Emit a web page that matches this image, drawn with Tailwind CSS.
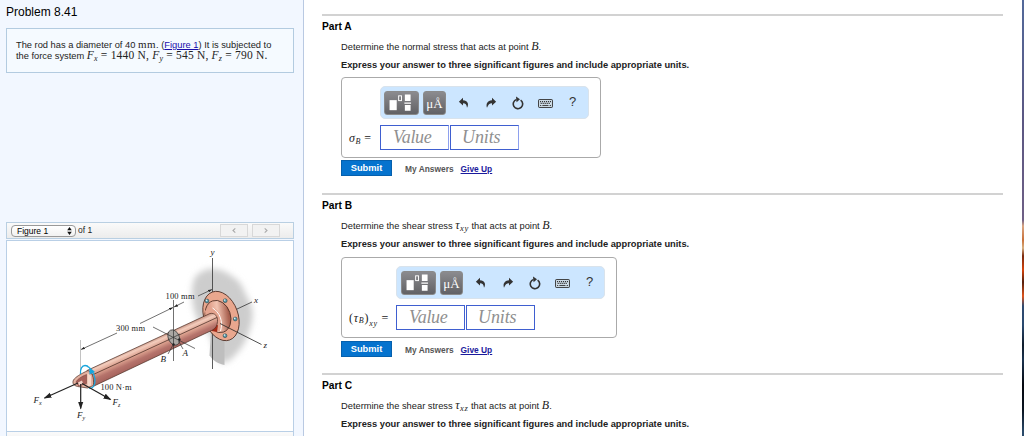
<!DOCTYPE html>
<html lang="en">
<head>
    <meta charset="UTF-8">
    <meta name="viewport" content="width=device-width, initial-scale=1.0">
    <title>Problem 8.41</title>
    <script src="https://cdn.jsdelivr.net/npm/@tailwindcss/browser@4"></script>
</head>
<body class="bg-white font-['Liberation_Sans',Arial,sans-serif] text-[9.3px] text-[#222] h-[436px] overflow-hidden flex">

    <!-- Shared icons -->
    <svg class="hidden">
        <symbol id="template" viewBox="0 0 34 23">
            <rect x="4.500" y="8.500" width="7.500" height="10.500" fill="#fff"/>
            <rect x="14" y="4" width="3" height="5" fill="none" stroke="#fff" stroke-width="1"/>
            <path d="M20.500 2.500h6v7h-6zM20 11h7v1.200h-7zM20.500 13.700h6v6h-6z" fill="#fff"/>
        </symbol>
        <symbol id="undo" viewBox="0 0 12 12">
            <path d="M5 .8 .9 4.800 5 8.500V6.200c2.600 0 3.700 1.400 4 4.500 2.300-3.600.6-7.300-4-7.500z" fill="#333"/>
        </symbol>
        <symbol id="redo" viewBox="0 0 12 12">
            <path d="M7 .8l4.100 4L7 8.500V6.200c-2.600 0-3.700 1.400-5 4.500C.7 7.100 2.400 3.400 7 3.200z" fill="#333"/>
        </symbol>
        <symbol id="reset" viewBox="0 0 12 14">
            <path d="M8.600 4.100A4.700 4.700 0 1 1 4.600 3.500" fill="none" stroke="#333" stroke-width="1.600"/>
            <path d="M4 .6 8 3.200 4.600 6.200z" fill="#333"/>
        </symbol>
        <symbol id="keyboard" viewBox="0 0 15 9">
            <rect x=".6" y=".6" width="13.800" height="7.800" rx=".6" fill="#dcecf8" stroke="#333" stroke-width="1"/>
            <path d="M2 2.600h11M2.600 4.300h10" stroke="#333" stroke-width="1.200" stroke-dasharray="1.200 .8"/>
            <path d="M2 6.400h1.300M4.300 6.400h6.200M11.600 6.400h1.400" stroke="#333" stroke-width="1"/>
        </symbol>
    </svg>

    <!-- Left column -->
    <aside class="w-[304px] shrink-0 h-full bg-[#f2f7ff] border-r border-[#b9c9e2] pl-[6px] pr-[9px] flex flex-col">
        <h1 class="text-[12px] leading-[14px] text-black mt-[5px] shrink-0">Problem 8.41</h1>
        <div class="mt-[9px] h-[45px] w-[288px] shrink-0 border border-[#b3cbe0] bg-[#f5faff] pl-[9px] pt-[9px] leading-[12px] text-[9.3px] whitespace-nowrap">
            <p class="h-[12px]">The rod has a diameter of 40 <span class="font-['Liberation_Serif',serif] text-[11px] tracking-[0.5px]">mm</span>. (<a href="#" class="text-[#1a0dab] underline">Figure 1</a>) It is subjected to</p>
            <p class="h-[12px] -mt-px">the force system <span class="font-['Liberation_Serif',serif] text-[11.5px] tracking-[0.2px]"><i>F<sub class="text-[8px] bottom-[-2px]">x</sub></i> = 1440 N, <i>F<sub class="text-[8px] bottom-[-2px]">y</sub></i> = 545 N, <i>F<sub class="text-[8px] bottom-[-2px]">z</sub></i> = 790 N.</span></p>
        </div>

        <!-- Figure picker -->
        <div class="mt-[149px] h-[17px] w-[288px] border border-[#b9cfe2] bg-linear-to-b from-[#fafafa] to-[#ececec] flex items-center pl-[4px] pr-[13px] shrink-0">
            <div class="w-[65px] h-[12px] border border-[#999] rounded-[4px] bg-linear-to-b from-white to-[#f1f1f1] flex items-center justify-between pl-[5px] pr-[3px] text-[8.5px] leading-[10px] text-black">
                <span>Figure 1</span>
                <svg class="w-[5px] h-[8px]" viewBox="0 0 5 8"><path d="M2.500 0 4.800 3.300H.2zM2.500 8 .2 4.700h4.600z" fill="#111"/></svg>
            </div>
            <span class="ml-[2px] text-[8.5px]">of 1</span>
            <div class="ml-auto flex gap-[4px]">
                <div class="w-[28px] h-[13px] border border-[#d8d8d8] bg-[#f2f2f2] flex items-center justify-center"><svg class="w-[4px] h-[5px]" viewBox="0 0 4 5"><path d="M3.300.4 1 2.500 3.300 4.600" fill="none" stroke="#aaa" stroke-width="1.100"/></svg></div>
                <div class="w-[28px] h-[13px] border border-[#d8d8d8] bg-[#f2f2f2] flex items-center justify-center"><svg class="w-[4px] h-[5px]" viewBox="0 0 4 5"><path d="M.7.4 3 2.500.7 4.600" fill="none" stroke="#aaa" stroke-width="1.100"/></svg></div>
            </div>
        </div>

        <!-- Figure 1: rod fixed to the wall -->
        <div class="mt-px w-[288px] h-[192px] shrink-0 border border-[#b9cfe6] bg-white">
            <svg class="w-[286px] h-[190px] font-['Liberation_Serif',serif]" viewBox="7 241 286 190" fill="#222">
                <defs>
                    <linearGradient id="rod" gradientUnits="userSpaceOnUse" x1="144" y1="342" x2="152" y2="360">
                        <stop offset="0" stop-color="#b98272"/>
                        <stop offset=".22" stop-color="#f3cdbd"/>
                        <stop offset=".45" stop-color="#dba08e"/>
                        <stop offset=".7" stop-color="#b5736b"/>
                        <stop offset="1" stop-color="#a5625c"/>
                    </linearGradient>
                    <linearGradient id="hub" x1="0" y1="0" x2="1" y2=".3">
                        <stop offset="0" stop-color="#e09a84"/>
                        <stop offset=".35" stop-color="#e3a48f"/>
                        <stop offset=".6" stop-color="#f2c4b2"/>
                        <stop offset="1" stop-color="#a8604f"/>
                    </linearGradient>
                    <filter id="soft" x="-20%" y="-20%" width="140%" height="140%"><feGaussianBlur stdDeviation="3"/></filter>
                    <marker id="head" markerUnits="userSpaceOnUse" markerWidth="8" markerHeight="6" refX="7" refY="3" orient="auto"><path d="M0 .3 8 3 0 5.700z"/></marker>
                    <marker id="tick" markerUnits="userSpaceOnUse" markerWidth="4" markerHeight="3" refX="4" refY="1.500" orient="auto"><path d="M0 .2 4 1.500 0 2.800z"/></marker>
                </defs>
                <!-- wall -->
                <path d="M203 271c8-5 22-1 30 6 8 4 10 12 14 20 6 9 7 18 4 28-3 12-8 22-15 29-4 5-8 8-14 9-6-4-8-14-12-28-12-8-18-26-18-41 0-12 2-19 11-23z" fill="#cdcdcd" filter="url(#soft)"/>
                <path d="M211 330l13.500 9v26c-6-1-11-4-15-9.500z" fill="#bebebe"/>
                <g stroke="#333" stroke-width=".8" fill="none">
                    <path d="M212.500 258v111"/>
                    <path d="M236 309.500 252 302"/>
                </g>
                <!-- flange -->
                <ellipse cx="221" cy="316" rx="17" ry="25.500" transform="rotate(-20 221 316)" fill="#e9a78e" stroke="#4c2c22" stroke-width=".8"/>
                <ellipse cx="218" cy="316.500" rx="12.500" ry="16.500" transform="rotate(-19 218 316.500)" fill="url(#hub)" stroke="#4c2c22" stroke-width=".8"/>
                <path d="M205 311c3-4 8-4 12-1 5 5 6 13 4 21l-8 1-6-5z" fill="#e4a48f"/>
                <path d="M212.500 308c7 4 11 13 8 23" fill="none" stroke="#fff" stroke-width="1"/>
                <path d="M211 327l7-2-1 7-5-1z" fill="#a52a16"/>
                <g fill="#5c9cab" stroke="#24464e" stroke-width=".6">
                    <circle cx="207" cy="301" r="1.900"/><circle cx="225.200" cy="300.700" r="1.900"/><circle cx="235.200" cy="319" r="1.900"/><circle cx="225" cy="335.700" r="1.900"/>
                </g>
                <g fill="#d8f0f4"><circle cx="206.500" cy="300.400" r=".8"/><circle cx="224.700" cy="300.100" r=".8"/><circle cx="234.700" cy="318.400" r=".8"/><circle cx="224.500" cy="335.100" r=".8"/></g>
                <!-- rod -->
                <path d="M87 370.500 210 313.500c5-1 8 3 7.500 8-.2 4-2 7-5 8.500L93 386.500z" fill="url(#rod)" stroke="#4c2c22" stroke-width=".7"/>
                <path d="M90 376 217 317.500" stroke="#3e241c" stroke-width=".7"/>
                <path d="M220 323.500 261.500 344.500" stroke="#222" stroke-width=".8"/>
                <ellipse cx="173.800" cy="337.500" rx="5.500" ry="8" transform="rotate(-24 173.800 337.500)" fill="#aaa7a3" stroke="#333" stroke-width=".7"/>
                <path d="M173.500 300v61M153 327l42 21.500M168 340l12-6M178.500 341l4.500 8M173 345l-5 9" stroke="#333" stroke-width=".7" fill="none"/>
                <circle cx="173.500" cy="344.500" r="1.200"/><circle cx="179.300" cy="339.500" r="1.200"/>
                <!-- cut end -->
                <path d="M88 370.500c4 2 6 6 5.500 15l-6 2.500-10-1.500c-4-1-5.500-3.500-4-6.500 2-3 7-6 14.500-9.500z" fill="#e3b09f" stroke="#4c2c22" stroke-width=".7"/>
                <path d="M86.500 374.500v9l-8 2.500-2.500-4c1.500-3 5.500-5.500 10.500-7.500z" fill="#a65f58" stroke="#713b34" stroke-width=".5"/>
                <path d="M87.500 373l3.500 3v9.500l-3.500 1z" fill="#f6d9cb"/>
                <path d="M78 382.500l4-2 1 3-4 2z" fill="#f1d3c8"/>
                <!-- dimensions -->
                <path d="M80.500 340v33" stroke="#bbb" stroke-width=".9"/>
                <g stroke="#333" stroke-width=".7">
                    <path d="M117 333 81 349.500" marker-end="url(#tick)"/>
                    <path d="M140 323.500 173 307.500" marker-end="url(#tick)"/>
                    <path d="M184 302 174 307" marker-end="url(#tick)"/>
                    <path d="M198 296 212 289.500" marker-end="url(#tick)"/>
                </g>
                <!-- torque -->
                <path d="M80.500 374c-.5-5 1.500-8.500 4.500-8.500 1.800 0 3 .8 4 2.200M92 371c3 5 4 11 1.500 15.500-1 1.500-3 2-4.500 1.500" fill="none" stroke="#18a5dc" stroke-width="1.300"/>
                <path d="M89 366.500l6 5.500-5.500 2.500z" fill="#18a5dc"/>
                <!-- forces -->
                <g stroke="#222" stroke-width="1.200">
                    <path d="M78 383 44.500 398" marker-end="url(#head)"/>
                    <path d="M82 383.500 110.500 399.500" marker-end="url(#head)"/>
                    <path d="M80.700 384v24.500" marker-end="url(#head)"/>
                </g>
                <g font-size="8.500">
                    <text x="165.500" y="299" textLength="29">100 mm</text>
                    <text x="116" y="331" textLength="29">300 mm</text>
                    <text x="100.500" y="390" textLength="31">100 N·m</text>
                </g>
                <g font-size="9" font-style="italic">
                    <text x="210.500" y="255">y</text>
                    <text x="254" y="303">x</text>
                    <text x="263.500" y="348">z</text>
                    <text x="160.500" y="362">B</text>
                    <text x="182.500" y="356">A</text>
                    <text x="33.500" y="403">F<tspan font-size="6" dy="1.500">x</tspan></text>
                    <text x="112.500" y="405">F<tspan font-size="6" dy="1.500">z</tspan></text>
                    <text x="77" y="418">F<tspan font-size="6" dy="2">y</tspan></text>
                </g>
            </svg>
        </div>
        <div class="w-[288px] h-[20px] shrink-0 -mt-px border border-[#b9cfe6] bg-linear-to-b from-[#fafafa] to-[#ececec]"></div>
    </aside>

    <!-- Right column -->
    <main class="flex-1 pl-[18px] pr-[19px] pt-[14px] whitespace-nowrap">
        <!-- Part A -->
        <section class="h-[179px] border-t-2 border-[#d2d2d2] pt-[4px]">
            <h2 class="font-bold text-[10.2px] leading-[14px] text-black">Part A</h2>
            <div class="pl-[19px]">
                <p class="mt-[6px] h-[12px] leading-[12px]">Determine the normal stress that acts at point <i class="font-['Liberation_Serif',serif] text-[12px]">B</i>.</p>
                <p class="mt-[7px] leading-[12px] font-bold">Express your answer to three significant figures and include appropriate units.</p>
                <div class="mt-[6px] w-[260px] h-[81px] border border-[#aaa] rounded-[4px] pt-[8px] pl-[38px]">
                    <div class="w-[209px] h-[33px] rounded-[5px] bg-[#cce6ff] border border-[#d9e3ec] flex items-center pl-[3px]">
                        <svg class="w-[35px] h-[24px] rounded-[3px] bg-linear-to-b from-[#8b8b8f] to-[#626265] border border-[#8a8a8a]"><use href="#template"/></svg>
                        <div class="ml-[4px] w-[23px] h-[24px] rounded-[3px] bg-linear-to-b from-[#8b8b8f] to-[#626265] border border-[#8a8a8a] text-white text-center font-['Liberation_Serif',serif] text-[13px] leading-[24px]">μÅ</div>
                        <svg class="ml-[12px] w-[12px] h-[12px]"><use href="#undo"/></svg>
                        <svg class="ml-[15px] w-[12px] h-[12px]"><use href="#redo"/></svg>
                        <svg class="ml-[15px] w-[12px] h-[14px]"><use href="#reset"/></svg>
                        <svg class="ml-[14px] mt-[2px] w-[15px] h-[9px]"><use href="#keyboard"/></svg>
                        <span class="ml-[16px] text-[13px] leading-[14px] text-[#333] -mt-px">?</span>
                    </div>
                    <div class="mt-[6px] -ml-[31px] flex items-center">
                        <span class="w-[31px] font-['Liberation_Serif',serif] text-[12px] leading-[12px] tracking-[0.5px]"><i>σ<sub class="text-[8px] bottom-[-2px]">B</sub></i> =</span>
                        <div class="w-[69px] h-[25px] border border-[#3f5fd0] border-r-[#8ea0ee] text-[#8f8f8f] font-['Liberation_Serif',serif] italic text-[18px] leading-[23px] pl-[12px] tracking-[-0.3px]">Value</div>
                        <div class="ml-px w-[69px] h-[25px] border border-[#3f5fd0] border-r-[#8ea0ee] text-[#8f8f8f] font-['Liberation_Serif',serif] italic text-[18px] leading-[23px] pl-[11px] tracking-[-0.1px]">Units</div>
                    </div>
                </div>
                <div class="mt-[2px] flex items-center h-[16px] font-bold">
                    <button class="w-[51px] h-[16px] bg-[#0573ce] border border-[#0560ad] text-white text-[9.3px] leading-[14px]">Submit</button>
                    <span class="ml-[13px] mt-[2px] text-[8.4px] text-[#555]">My Answers</span>
                    <a href="#" class="ml-[7px] mt-[2px] text-[8.4px] text-[#1a1a9c] underline">Give Up</a>
                </div>
            </div>
        </section>

        <!-- Part B -->
        <section class="h-[180px] border-t-2 border-[#d2d2d2] pt-[4px]">
            <h2 class="font-bold text-[10.2px] leading-[14px] text-black">Part B</h2>
            <div class="pl-[19px]">
                <p class="mt-[6px] h-[12px] leading-[12px]">Determine the shear stress <i class="font-['Liberation_Serif',serif] text-[12px] tracking-[0.6px]">τ<sub class="text-[8.5px] bottom-[-2px]">xy</sub></i> that acts at point <i class="font-['Liberation_Serif',serif] text-[12px]">B</i>.</p>
                <p class="mt-[7px] leading-[12px] font-bold">Express your answer to three significant figures and include appropriate units.</p>
                <div class="mt-[7px] w-[276px] h-[81px] border border-[#aaa] rounded-[4px] pt-[8px] pl-[54px]">
                    <div class="w-[209px] h-[33px] rounded-[5px] bg-[#cce6ff] border border-[#d9e3ec] flex items-center pl-[4px]">
                        <svg class="w-[35px] h-[24px] rounded-[3px] bg-linear-to-b from-[#8b8b8f] to-[#626265] border border-[#8a8a8a]"><use href="#template"/></svg>
                        <div class="ml-[4px] w-[23px] h-[24px] rounded-[3px] bg-linear-to-b from-[#8b8b8f] to-[#626265] border border-[#8a8a8a] text-white text-center font-['Liberation_Serif',serif] text-[13px] leading-[24px]">μÅ</div>
                        <svg class="ml-[12px] w-[12px] h-[12px]"><use href="#undo"/></svg>
                        <svg class="ml-[15px] w-[12px] h-[12px]"><use href="#redo"/></svg>
                        <svg class="ml-[15px] w-[12px] h-[14px]"><use href="#reset"/></svg>
                        <svg class="ml-[14px] mt-[2px] w-[15px] h-[9px]"><use href="#keyboard"/></svg>
                        <span class="ml-[16px] text-[13px] leading-[14px] text-[#333] -mt-px">?</span>
                    </div>
                    <div class="mt-[6px] -ml-[47px] flex items-center">
                        <span class="w-[47px] font-['Liberation_Serif',serif] text-[12px] leading-[12px] tracking-[0.75px]">(<i>τ<sub class="text-[8px] bottom-[-1px]">B</sub></i>)<sub class="text-[8px] bottom-[-4px] italic">xy</sub> =</span>
                        <div class="w-[69px] h-[25px] border border-[#3f5fd0] text-[#8f8f8f] font-['Liberation_Serif',serif] italic text-[18px] leading-[23px] pl-[12px] tracking-[-0.3px]">Value</div>
                        <div class="ml-px w-[69px] h-[25px] border border-[#3f5fd0] text-[#8f8f8f] font-['Liberation_Serif',serif] italic text-[18px] leading-[23px] pl-[11px] tracking-[-0.1px]">Units</div>
                    </div>
                </div>
                <div class="mt-[3px] flex items-center h-[16px] font-bold">
                    <button class="w-[51px] h-[16px] bg-[#0573ce] border border-[#0560ad] text-white text-[9.3px] leading-[14px]">Submit</button>
                    <span class="ml-[13px] mt-[2px] text-[8.4px] text-[#555]">My Answers</span>
                    <a href="#" class="ml-[7px] mt-[2px] text-[8.4px] text-[#1a1a9c] underline">Give Up</a>
                </div>
            </div>
        </section>

        <!-- Part C -->
        <section class="border-t-2 border-[#d2d2d2] pt-[4px]">
            <h2 class="font-bold text-[10.2px] leading-[14px] text-black">Part C</h2>
            <div class="pl-[19px]">
                <p class="mt-[6px] h-[12px] leading-[12px]">Determine the shear stress <i class="font-['Liberation_Serif',serif] text-[12px] tracking-[0.6px]">τ<sub class="text-[8.5px] bottom-[-2px]">xz</sub></i> that acts at point <i class="font-['Liberation_Serif',serif] text-[12px]">B</i>.</p>
                <p class="mt-[7px] leading-[12px] font-bold">Express your answer to three significant figures and include appropriate units.</p>
            </div>
        </section>
    </main>

    <!-- Desktop showing past the window edge -->
    <div class="w-[2px] shrink-0 h-full bg-[linear-gradient(to_bottom,#53699a_0px,#5b5783_120px,#6e5f85_220px,#d9a582_226px,#c8703a_240px,#d8b080_248px,#7a2a10_256px,#d8440c_270px,#54200f_282px,#e0531a_296px,#2f4a70_306px,#2a4a70_325px,#101c2c_345px,#1b3350_360px,#05080f_385px,#0a1420_410px,#2a4a6a_432px)]"></div>
</body>
</html>
